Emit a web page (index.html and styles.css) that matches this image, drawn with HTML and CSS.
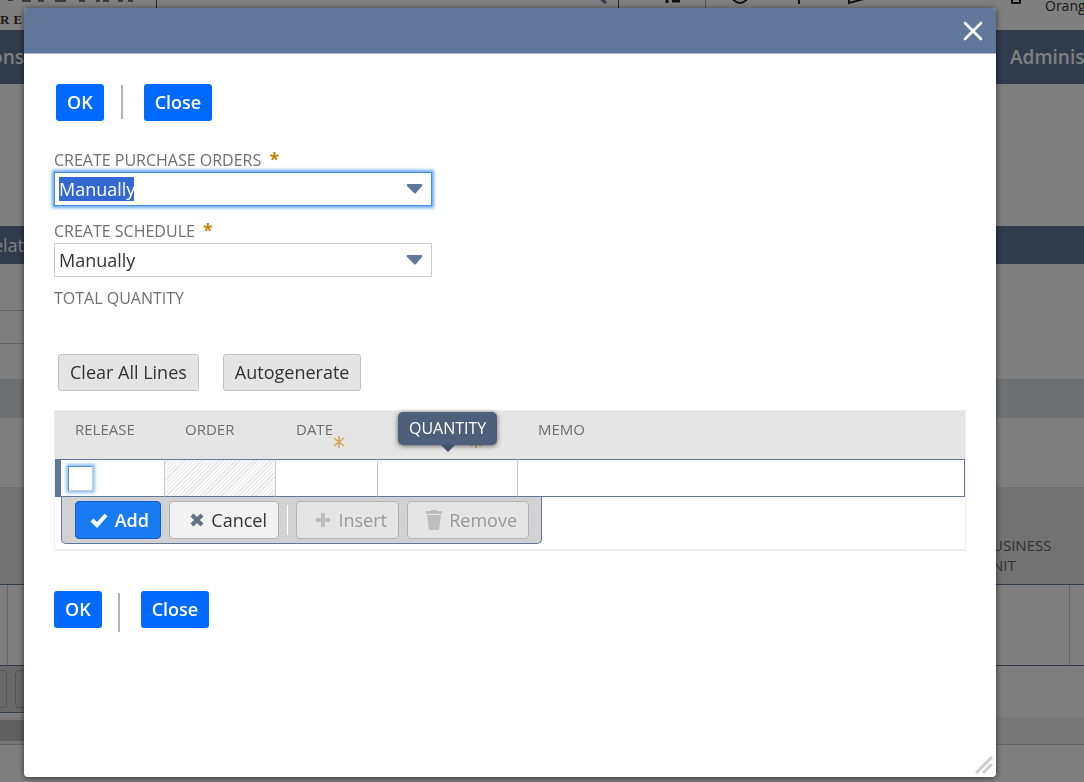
FILE: index.html
```html
<!DOCTYPE html>
<html lang="en">
<head>
  <meta charset="UTF-8">
  <meta name="viewport" content="width=device-width, initial-scale=1">
  <title>Schedule</title>
  <link rel="stylesheet" href="styles.css">
</head>
<body>
  <div class="page">
    <div class="topbar">
      <div class="logo">
        <svg class="logo-mark" width="134" height="3" viewBox="0 0 134 3" aria-hidden="true">
          <path d="M8 0h5M23 0v1h8M39 0v1h5M56 0v1h10M80 0v1h5M97 0v1h3M104 0v1h5M119 0v1h4M129 0v1h4" fill="none" stroke="#777" stroke-width="2"/>
        </svg>
        <span class="logo-sub">RE</span>
      </div>
      <div class="search">
        <svg width="12" height="8" viewBox="0 0 12 8" aria-hidden="true"><path d="M1-3l7 6" stroke="#607799" stroke-width="3"/></svg>
      </div>
      <div class="tool">
        <svg width="24" height="8" viewBox="0 0 24 8" aria-hidden="true"><path d="M8-4V3M13 1h8" stroke="#222" stroke-width="3"/></svg>
      </div>
      <div class="tools">
        <svg width="24" height="8" viewBox="0 0 24 8" aria-hidden="true"><circle cx="12" cy="-5" r="8" fill="none" stroke="#222" stroke-width="2"/></svg>
        <svg width="24" height="8" viewBox="0 0 24 8" aria-hidden="true"><path d="M12-4V4" stroke="#222" stroke-width="2"/></svg>
        <svg width="24" height="8" viewBox="0 0 24 8" aria-hidden="true"><path d="M3-4V3L18-1" fill="none" stroke="#222" stroke-width="2"/></svg>
      </div>
      <div class="user">
        <svg width="12" height="8" viewBox="0 0 12 8" aria-hidden="true"><path d="M2-3V3H10V-3" fill="none" stroke="#222" stroke-width="2"/></svg>
        <span>Orang</span>
      </div>
    </div>
    <div class="nav"><span class="nav-left">ons</span><span class="nav-right">Adminis</span></div>
    <div class="page-head"></div>
    <div class="section-bar"><span class="nav-left">elat</span></div>
    <div class="tab-lines"><i></i><i></i></div>
    <div class="subtab"></div>
    <div class="page-gap"></div>
    <div class="sub-head"><span>USINESS<br>NIT</span></div>
    <div class="sub-row"><i></i><i></i></div>
    <div class="sub-tools"><div class="sub-tools-box"><i></i><i></i></div></div>
    <div class="sub-foot"><i></i></div>
  </div>
  <div class="overlay"></div>

  <div class="dialog" role="dialog" aria-label="Schedule">
    <div class="dialog-head">
      <button class="dialog-x" type="button" aria-label="Close window">
        <svg width="20" height="20" viewBox="0 0 20 20"><path d="M2 2l16 16M18 2L2 18" stroke="#fff" stroke-width="2.6" stroke-linecap="round"/></svg>
      </button>
    </div>
    <form class="dialog-body">
      <div class="actions actions-top">
        <button class="btn-primary" type="button">OK</button>
        <span class="divider"></span>
        <button class="btn-primary" type="button">Close</button>
      </div>

      <div class="field">
        <label for="orders">CREATE PURCHASE ORDERS <b class="req">*</b></label>
        <div class="select-wrap">
          <select id="orders" class="focused"><option>Manually</option></select>
          <svg class="arrow" width="18" height="10" viewBox="0 0 18 10" aria-hidden="true"><path d="M2 0h13q2 0 1 2l-6 7q-1 1-2 0L1 2q-1-2 1-2z" fill="#607799"/></svg>
        </div>
      </div>
      <div class="field">
        <label for="schedule">CREATE SCHEDULE <b class="req">*</b></label>
        <div class="select-wrap">
          <select id="schedule"><option>Manually</option></select>
          <svg class="arrow" width="18" height="10" viewBox="0 0 18 10" aria-hidden="true"><path d="M2 0h13q2 0 1 2l-6 7q-1 1-2 0L1 2q-1-2 1-2z" fill="#607799"/></svg>
        </div>
      </div>
      <div class="total">TOTAL QUANTITY</div>

      <div class="line-actions">
        <button class="btn" type="button">Clear All Lines</button>
        <button class="btn" type="button">Autogenerate</button>
      </div>

      <div class="lines">
        <table>
          <colgroup>
            <col class="col-release"><col class="col-order"><col class="col-date"><col class="col-qty"><col>
          </colgroup>
          <thead>
            <tr>
              <th>RELEASE</th>
              <th>ORDER</th>
              <th><span class="th-req">DATE
                <svg class="star" width="14" height="14" viewBox="0 0 14 14" aria-hidden="true"><path d="M7 1v12M2 3l10 8M12 3L2 11" stroke="#d6a556" stroke-width="1.6"/></svg></span></th>
              <th><span class="th-req th-tip"><span class="tooltip">QUANTITY</span>
                <svg class="star" width="14" height="14" viewBox="0 0 14 14" aria-hidden="true"><path d="M7 1v12M2 3l10 8M12 3L2 11" stroke="#d6a556" stroke-width="1.6"/></svg></span></th>
              <th>MEMO</th>
            </tr>
          </thead>
          <tbody>
            <tr>
              <td class="cell-check"><input type="checkbox" aria-label="Release"></td>
              <td class="hatched"></td>
              <td></td>
              <td></td>
              <td></td>
            </tr>
          </tbody>
        </table>
        <div class="row-tools">
          <button class="tool-btn add" type="button">
            <svg width="18" height="16" viewBox="0 0 18 16"><path d="M2 8l5 5L16 3" fill="none" stroke="#fff" stroke-width="4"/></svg>Add
          </button>
          <button class="tool-btn cancel" type="button">
            <svg width="14" height="14" viewBox="0 0 14 14"><path d="M2 2l10 10M12 2L2 12" stroke="#607085" stroke-width="4"/></svg>Cancel
          </button>
          <span class="tool-sep"></span>
          <button class="tool-btn insert" type="button" disabled>
            <svg width="16" height="16" viewBox="0 0 16 16"><path d="M8 1v14M1 8h14" stroke="#bdbdbd" stroke-width="4"/></svg>Insert
          </button>
          <button class="tool-btn remove" type="button" disabled>
            <svg width="16" height="20" viewBox="0 0 16 20"><path d="M5 0h6v1h5v3H0V1h5zM1 5h14l-2 15H3z" fill="#bdbdbd"/></svg>Remove
          </button>
        </div>
      </div>

      <div class="actions actions-bottom">
        <button class="btn-primary" type="button">OK</button>
        <span class="divider"></span>
        <button class="btn-primary" type="button">Close</button>
      </div>
    </form>
    <svg class="grip" width="18" height="18" viewBox="0 0 18 18" aria-hidden="true"><path d="M1 17L17 1M8 17l9-9" stroke="#ccc" stroke-width="3"/></svg>
  </div>
</body>
</html>
```
FILE: styles.css
```css
* {
  box-sizing: border-box;
}
body {
  margin: 0;
  font-family: "Open Sans", "Noto Sans", sans-serif;
  font-size: 16px;
  color: #333;
  overflow: hidden;
}
button, select {
  font-family: inherit;
  margin: 0;
}

/* page behind the dialog */
.page {
  height: 100vh;
  overflow: hidden;
  background: #fff;
}
.topbar {
  display: flex;
  height: 30px;
  overflow: hidden;
}
.topbar svg {
  display: block;
  flex: none;
}
.logo {
  width: 157px;
  height: 8px;
  border-right: 1px solid #555;
}
.logo-sub {
  display: block;
  padding-top: 9px;
  line-height: 16px;
  font-family: "Liberation Serif", serif;
  font-size: 13px;
  font-weight: bold;
  letter-spacing: 4px;
}
.search {
  display: flex;
  justify-content: flex-end;
  flex: 1;
  height: 8px;
  padding-right: 8px;
  border-right: 1px solid #444;
}
.tool {
  width: 87px;
  height: 8px;
  padding-left: 40px;
  border-right: 1px solid #aaa;
}
.tools {
  display: flex;
  gap: 35px;
  width: 304px;
  padding-left: 22px;
}
.user {
  display: flex;
  gap: 23px;
  width: 74px;
  line-height: 12px;
  font-size: 14px;
}
.nav, .section-bar {
  display: flex;
  justify-content: space-between;
  align-items: center;
  height: 54px;
  background: #607799;
  color: #fff;
  font-size: 19px;
  font-weight: 600;
}
.nav-left {
  display: flex;
  justify-content: flex-end;
  width: 24px;
}
.nav-right {
  width: 74px;
}
.page-head {
  height: 142px;
}
.section-bar {
  height: 38px;
  font-size: 18px;
  font-weight: normal;
}
.tab-lines {
  height: 115px;
  padding-top: 14px;
}
.tab-lines i {
  display: block;
  width: 80px;
  height: 33px;
  border-bottom: 1px solid #ccc;
}
.subtab {
  height: 39px;
  background: #dfe4eb;
}
.page-gap {
  height: 69px;
}
.sub-head {
  display: flex;
  justify-content: flex-end;
  height: 98px;
  padding-top: 48px;
  background: #e5e5e5;
  border-bottom: 1px solid #607799;
  color: #666;
  font-size: 15px;
  line-height: 20px;
}
.sub-head span {
  width: 92px;
}
.sub-row {
  display: flex;
  justify-content: space-between;
  height: 81px;
  padding: 0 14px 0 7px;
  border-bottom: 1px solid #607799;
}
.sub-row i {
  border-left: 1px solid #ccc;
}
.sub-tools {
  height: 51px;
}
.sub-tools-box {
  display: flex;
  gap: 8px;
  width: 60px;
  height: 47px;
  padding-top: 4px;
  background: #d2d2d2;
  border-bottom: 1px solid #607799;
}
.sub-tools-box i {
  width: 7px;
  height: 38px;
  border: 1px solid #aaa;
  border-left: 0;
  border-radius: 0 4px 4px 0;
}
.sub-tools-box i + i {
  width: 40px;
  border-left: 1px solid #aaa;
  border-radius: 4px;
}
.sub-foot {
  height: 28px;
  padding-top: 3px;
  background: #f0f0f0;
  border-bottom: 1px solid #ccc;
}
.sub-foot i {
  display: block;
  width: 80px;
  height: 21px;
  background: #c1c1c1;
}
.overlay {
  position: fixed;
  inset: 0;
  background: rgba(0, 0, 0, 0.5);
}

/* dialog */
.dialog {
  position: fixed;
  inset: 8px 88px 5px 24px;
  display: flex;
  flex-direction: column;
  background: #fff;
  border-radius: 4px;
  box-shadow: 0 1px 6px rgba(0, 0, 0, 0.6);
}
.dialog-head {
  display: flex;
  justify-content: flex-end;
  align-items: center;
  height: 46px;
  padding-right: 13px;
  background: #607799;
  border-bottom: 1px solid #a9b8d0;
  border-radius: 4px 4px 0 0;
}
.dialog-x {
  display: flex;
  padding: 0;
  border: 0;
  background: none;
  cursor: pointer;
}
.dialog-body {
  padding: 30px;
}
.actions {
  display: flex;
  align-items: flex-start;
}
.actions-top {
  padding-left: 2px;
}
.actions-bottom {
  margin-top: 40px;
}
.btn-primary {
  height: 37px;
  padding: 0 11px 2px;
  border: 0;
  border-radius: 3px;
  background: #006aff;
  color: #fff;
  font-size: 18px;
  font-weight: 600;
  cursor: pointer;
}
.divider {
  width: 2px;
  height: 34px;
  margin: 1px 21px 0 17px;
  background: #b3b3b3;
}
.actions-bottom .divider {
  height: 39px;
  margin: 2px 21px 0 16px;
}
.field {
  width: 378px;
  margin-bottom: 13px;
}
.actions-top + .field {
  margin-top: 27px;
}
.field label {
  display: block;
  height: 24px;
  line-height: 24px;
  color: #6f6f6f;
}
.req {
  margin-left: 4px;
  color: #c77f02;
  font-size: 18px;
  line-height: 20px;
}
.select-wrap {
  position: relative;
}
.field select {
  display: block;
  width: 100%;
  height: 34px;
  padding: 0 4px;
  border: 1px solid #ccc;
  border-radius: 0;
  outline: 0;
  background: #fff;
  color: #333;
  font-size: 18px;
  appearance: none;
}
.field select.focused {
  border-color: #4a90e2;
  box-shadow: 0 0 3px 2px #62a8ee;
  background: linear-gradient(#3367d1, #3367d1) 4px 4px / 75px 24px no-repeat #fff;
  color: #fff;
}
.arrow {
  position: absolute;
  right: 8px;
  top: 12px;
}
.total {
  line-height: 24px;
  margin-top: -4px;
  color: #6f6f6f;
}
.line-actions {
  display: flex;
  gap: 24px;
  margin: 44px 0 19px;
  padding-left: 4px;
}
.btn {
  height: 37px;
  padding: 0 11px 1px;
  border: 1px solid #c3c3c3;
  border-radius: 3px;
  background: #e4e4e4;
  color: #333;
  font-size: 18px;
  font-weight: 500;
  cursor: pointer;
}

/* line items */
.lines {
  height: 141px;
  border: 1px solid #efefef;
  border-bottom: 2px solid #eee;
}
.lines table {
  width: 100%;
  table-layout: fixed;
  border-spacing: 0;
}
.col-release {
  width: 110px;
}
.col-order {
  width: 111px;
}
.col-date {
  width: 102px;
}
.col-qty {
  width: 140px;
}
.lines th {
  height: 48px;
  padding: 8px 0 0 20px;
  background: #e5e5e5;
  color: #6f6f6f;
  font-size: 15px;
  font-weight: normal;
  line-height: 20px;
  text-align: left;
  vertical-align: top;
}
.lines td {
  height: 38px;
  padding: 0;
  border-top: 1px solid #607799;
  border-bottom: 1px solid #607799;
  border-right: 1px solid #ccc;
}
.lines td:last-child {
  border-right-color: #607799;
}
.lines .cell-check {
  padding-left: 7px;
  border-left: 6px solid #607799;
}
.cell-check input {
  display: block;
  width: 25px;
  height: 25px;
  margin: 0;
  border: 1px solid #ccc;
  border-top-color: #4a90e2;
  border-left-color: #4a90e2;
  box-shadow: 0 0 3px 2px #8dc0f3;
  background: #fff;
  appearance: none;
}
.lines .hatched {
  background: repeating-linear-gradient(135deg, #fafafa 0 2px, #e6e6e6 2px 3px);
}
.th-req {
  position: relative;
}
.star {
  position: absolute;
  right: -13px;
  top: 16px;
}
.tooltip {
  position: absolute;
  left: 0;
  top: -7px;
  z-index: 1;
  padding: 0 11px;
  border-radius: 5px;
  background: #4d5f7b;
  box-shadow: 0 1px 5px rgba(0, 0, 0, 0.6);
  color: #fff;
  font-size: 16px;
  line-height: 33px;
}
.th-tip {
  display: block;
  width: 72px;
}
.tooltip::after {
  content: "";
  position: absolute;
  left: 50%;
  top: 100%;
  margin-left: -7px;
  border: 7px solid transparent;
  border-top-color: #42526d;
  border-bottom: 0;
}
.row-tools {
  display: flex;
  gap: 8px;
  width: 481px;
  margin-left: 6px;
  padding: 4px 12px 4px 13px;
  background: #d2d2d2;
  border: 1px solid #607799;
  border-top: 0;
  border-radius: 0 0 5px 5px;
}
.tool-btn {
  display: flex;
  align-items: center;
  justify-content: flex-end;
  gap: 7px;
  height: 38px;
  padding: 0 11px;
  border: 1px solid #b2b2b2;
  border-radius: 4px;
  background: #f2f2f2;
  color: #333;
  font-size: 18px;
  font-weight: 500;
}
.tool-btn.add {
  width: 86px;
  border-color: #1360c4;
  background: #187bf2;
  color: #fff;
  font-weight: 600;
}
.tool-btn.cancel {
  width: 110px;
}
.tool-btn.insert {
  width: 103px;
}
.tool-btn.remove {
  width: 122px;
}
.tool-btn:disabled {
  background: #e5e5e5;
  color: #999;
}
.tool-sep {
  width: 1px;
  height: 30px;
  margin-top: 4px;
  background: #fff;
}
.grip {
  position: absolute;
  right: 3px;
  bottom: 3px;
}
```
